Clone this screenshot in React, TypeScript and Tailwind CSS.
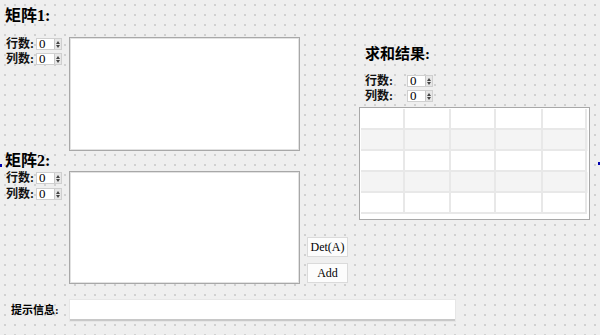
import React from 'react';

const Spin: React.FC<{ label: string; labelWidth: string }> = ({ label, labelWidth }) => (
  <div className="flex items-center h-[12px]">
    <span className={`${labelWidth} text-[12px] leading-[12px] font-bold text-[#111]`}>{label}</span>
    <div className="flex w-[26px] h-[12px] bg-white border border-[#cfcfcf]">
      <span className="flex-1 pl-[2px] text-[13px] leading-[10px] text-black">0</span>
      <div className="w-[7px] flex flex-col items-center justify-center bg-[#e6e6e6] border-l border-[#c8c8c8] gap-[1px]">
        <span className="w-0 h-0 border-l-[2px] border-r-[2px] border-b-[3px] border-l-transparent border-r-transparent border-b-[#444]" />
        <span className="w-0 h-0 border-l-[2px] border-r-[2px] border-t-[3px] border-l-transparent border-r-transparent border-t-[#444]" />
      </div>
    </div>
  </div>
);

const TextBox: React.FC<{ h: string }> = ({ h }) => (
  <div className={`w-[231px] ${h} bg-white border border-[#a8a8a8] shadow-[inset_0_0_0_1px_#e2e2e2]`} />
);

const cols = ['w-[44px]', 'w-[46px]', 'w-[45px]', 'w-[47px]', 'w-[44px]'];

const ResultTable: React.FC = () => (
  <div className="w-[231px] h-[113px] bg-white border border-[#a8a8a8] p-[1px] flex flex-col">
    {[0, 1, 2, 3, 4].map((r) => (
      <div key={r} className={`flex h-[21px] ${r % 2 ? 'bg-[#f4f4f4]' : 'bg-white'}`}>
        {cols.map((w, c) => (
          <div key={c} className={`${w} h-full border-r-2 border-b-2 border-[#e8e8e8]`} />
        ))}
      </div>
    ))}
  </div>
);

const Btn: React.FC<{ text: string }> = ({ text }) => (
  <button className="w-[41px] h-[20px] px-0 bg-[#fcfcfc] border border-[#dadada] text-[12px] leading-[18px] text-black whitespace-nowrap">
    {text}
  </button>
);

export default function App() {
  return (
    <div className="relative w-[600px] h-[335px] overflow-hidden bg-[#efefef] bg-[radial-gradient(circle,#d0d0d0_0.7px,transparent_0.9px)] bg-[size:10px_10px] [font-family:'Liberation_Serif','Noto_Sans_CJK_SC',serif] text-black flex flex-col">
      <div className="flex h-[292px]">
        <div className="w-[300px] pl-[5px] pt-[6px] flex flex-col">
          <h1 className="text-[16px] leading-[20px] font-bold">矩阵1:</h1>
          <div className="flex mt-[11px]">
            <div className="w-[64px] pl-[1px] pt-[1px] flex flex-col gap-[3px]">
              <Spin label="行数:" labelWidth="w-[30px]" />
              <Spin label="列数:" labelWidth="w-[30px]" />
            </div>
            <TextBox h="h-[114px]" />
          </div>
          <h1 className="text-[16px] leading-[20px] font-bold">矩阵2:</h1>
          <div className="flex">
            <div className="w-[64px] pl-[1px] pt-[1px] flex flex-col gap-[4px]">
              <Spin label="行数:" labelWidth="w-[30px]" />
              <Spin label="列数:" labelWidth="w-[30px]" />
            </div>
            <TextBox h="h-[113px]" />
          </div>
        </div>
        <div className="w-[58px] pl-[7px] pt-[237px] flex flex-col gap-[6px]">
          <Btn text="Det(A)" />
          <Btn text="Add" />
        </div>
        <div className="w-[242px] pt-[45px] flex flex-col">
          <h2 className="pl-[7px] text-[15px] leading-[19px] font-bold">求和结果:</h2>
          <div className="pl-[7px] mt-[11px] flex flex-col gap-[3px]">
            <Spin label="行数:" labelWidth="w-[42px]" />
            <Spin label="列数:" labelWidth="w-[42px]" />
          </div>
          <div className="mt-[5px] pl-[1px]">
            <ResultTable />
          </div>
        </div>
      </div>
      <div className="flex items-start pl-[11px] pt-[8px]">
        <span className="w-[59px] pt-[3px] text-[11px] leading-[14px] font-bold">提示信息:</span>
        <div className="w-[385px] h-[21px] bg-white border-b-2 border-[#c8c8c8] shadow-[0_0_0_1px_#e6e6e6]" />
      </div>
      <span className="absolute left-0 top-[164px] w-[2px] h-[3px] bg-[#0000b0]" />
      <span className="absolute right-0 top-[162px] w-[2px] h-[3px] bg-[#0000b0]" />
    </div>
  );
}
